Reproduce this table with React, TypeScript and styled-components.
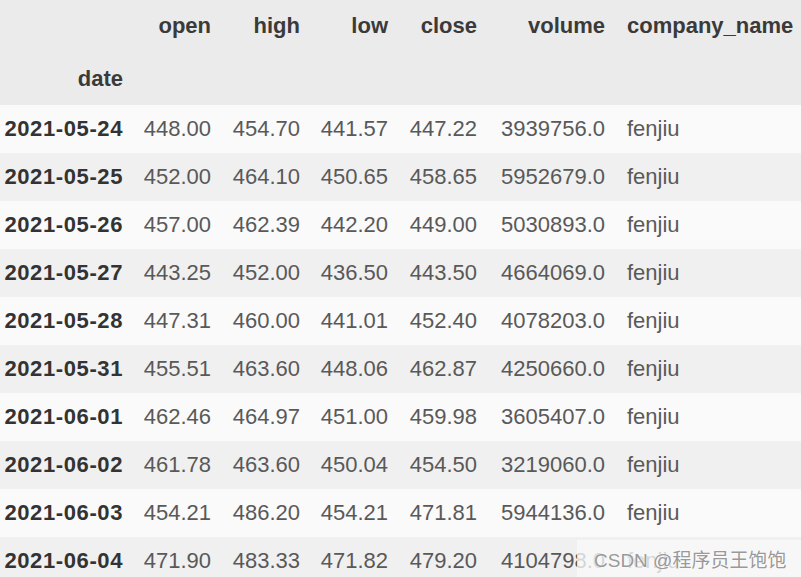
import styled, { createGlobalStyle } from "styled-components";

const GlobalStyle = createGlobalStyle`
  html, body {
    margin: 0;
    padding: 0;
    background: #fafafa;
    overflow: hidden;
  }
`;

const Page = styled.div`
  position: relative;
  width: 801px;
  height: 577px;
  overflow: hidden;
  font-family: "Liberation Sans", Arial, sans-serif;
  font-size: 22px;
`;

const Table = styled.table`
  border-collapse: collapse;
  table-layout: fixed;
  width: 900px;
`;

const HeadRow = styled.tr<{ $height: number }>`
  background: #ebebeb;
  height: ${({ $height }) => $height}px;
`;

const BodyRow = styled.tr<{ $striped: boolean }>`
  height: 48px;
  background: ${({ $striped }) => ($striped ? "#f0f0f0" : "#fafafa")};
`;

const HeadCell = styled.th<{ $left?: boolean }>`
  padding: 0 10px 0 ${({ $left }) => ($left ? "12px" : "0")};
  text-align: ${({ $left }) => ($left ? "left" : "right")};
  font-weight: 700;
  color: #3a3a3a;
  white-space: nowrap;
  vertical-align: middle;
`;

const IndexCell = styled.th`
  padding: 0 10px 0 0;
  text-align: right;
  font-weight: 700;
  color: #333;
  letter-spacing: 0.6px;
  white-space: nowrap;
`;

const Cell = styled.td<{ $left?: boolean }>`
  padding: 0 10px 0 ${({ $left }) => ($left ? "12px" : "0")};
  text-align: ${({ $left }) => ($left ? "left" : "right")};
  color: #595959;
  white-space: nowrap;
`;

const Watermark = styled.div`
  position: absolute;
  right: 0;
  bottom: 0;
  width: 224px;
  height: 37px;
  display: flex;
  align-items: center;
  padding-left: 17px;
  box-sizing: border-box;
  background: rgba(248, 248, 248, 0.78);
  color: rgba(140, 140, 140, 0.9);
  font-family: "Liberation Sans", "Noto Sans CJK SC", sans-serif;
  font-size: 19px;
  text-shadow: 0 0 2px #fff;
  white-space: nowrap;
`;

const columns = ["open", "high", "low", "close", "volume", "company_name"];
const widths = [133, 88, 89, 88, 89, 128, 295];

const rows: [string, string, string, string, string, string][] = [
  ["2021-05-24", "448.00", "454.70", "441.57", "447.22", "3939756.0"],
  ["2021-05-25", "452.00", "464.10", "450.65", "458.65", "5952679.0"],
  ["2021-05-26", "457.00", "462.39", "442.20", "449.00", "5030893.0"],
  ["2021-05-27", "443.25", "452.00", "436.50", "443.50", "4664069.0"],
  ["2021-05-28", "447.31", "460.00", "441.01", "452.40", "4078203.0"],
  ["2021-05-31", "455.51", "463.60", "448.06", "462.87", "4250660.0"],
  ["2021-06-01", "462.46", "464.97", "451.00", "459.98", "3605407.0"],
  ["2021-06-02", "461.78", "463.60", "450.04", "454.50", "3219060.0"],
  ["2021-06-03", "454.21", "486.20", "454.21", "471.81", "5944136.0"],
  ["2021-06-04", "471.90", "483.33", "471.82", "479.20", "4104798.0"],
];

export default function App() {
  return (
    <>
      <GlobalStyle />
      <Page>
        <Table>
          <colgroup>
            {widths.map((w, i) => (
              <col key={i} style={{ width: w }} />
            ))}
          </colgroup>
          <thead>
            <HeadRow $height={52}>
              <HeadCell />
              {columns.map((c) => (
                <HeadCell key={c} $left={c === "company_name"}>
                  {c}
                </HeadCell>
              ))}
            </HeadRow>
            <HeadRow $height={53}>
              <HeadCell>date</HeadCell>
              {columns.map((c) => (
                <HeadCell key={c} />
              ))}
            </HeadRow>
          </thead>
          <tbody>
            {rows.map((r, i) => (
              <BodyRow key={r[0]} $striped={i % 2 === 1}>
                <IndexCell>{r[0]}</IndexCell>
                {r.slice(1).map((v, j) => (
                  <Cell key={j}>{v}</Cell>
                ))}
                <Cell $left>fenjiu</Cell>
              </BodyRow>
            ))}
          </tbody>
        </Table>
        <Watermark>CSDN @程序员王饱饱</Watermark>
      </Page>
    </>
  );
}
